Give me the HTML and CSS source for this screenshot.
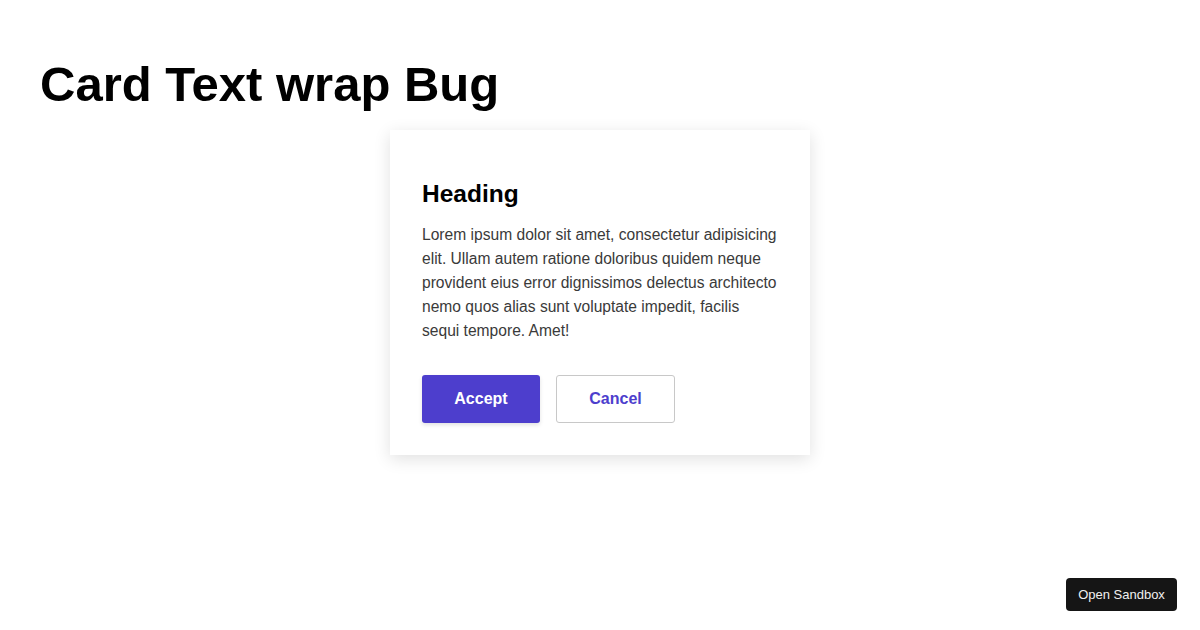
FILE: index.html
```html
<!DOCTYPE html>
<html>
<head>
<meta charset="utf-8">
<link rel="stylesheet" href="styles.css">
</head>
<body>
<div class="page">
  <h1 class="title">Card Text wrap Bug</h1>
  <div class="card">
    <h2 class="card-heading">Heading</h2>
    <p class="card-text">Lorem ipsum dolor sit amet, consectetur adipisicing elit. Ullam autem ratione doloribus quidem neque provident eius error dignissimos delectus architecto nemo quos alias sunt voluptate impedit, facilis sequi tempore. Amet!</p>
    <div class="actions">
      <button class="btn btn-primary">Accept</button>
      <button class="btn btn-secondary">Cancel</button>
    </div>
  </div>
</div>
<a class="sandbox">Open Sandbox</a>
</body>
</html>
```
FILE: styles.css
```css
html, body {
  margin: 0;
  padding: 0;
  background: #fff;
  font-family: "Liberation Sans", Arial, sans-serif;
}
.page {
  padding: 56px 40px 40px;
  display: flex;
  flex-direction: column;
}
.title {
  margin: 0 0 18px;
  font-size: 49px;
  font-weight: 700;
  color: #000;
  line-height: 56px;
}
.card {
  align-self: center;
  width: 420px;
  box-sizing: border-box;
  padding: 48px 32px 32px;
  background: #fff;
  box-shadow: 0 4px 16px rgba(0, 0, 0, 0.12);
}
.card-heading {
  margin: 0 0 13px;
  font-size: 24.5px;
  line-height: 32px;
  font-weight: 700;
  color: #000;
}
.card-text {
  margin: 0 0 32px;
  font-size: 15.6px;
  line-height: 24px;
  color: #3a3a3a;
}
.actions {
  display: flex;
  gap: 16px;
}
.btn {
  width: 118px;
  height: 48px;
  box-sizing: border-box;
  border-radius: 3px;
  font-family: "Liberation Sans", Arial, sans-serif;
  font-size: 16px;
  font-weight: 700;
  cursor: pointer;
}
.btn-primary {
  background: #4d3ecd;
  color: #fff;
  border: none;
  box-shadow: 0 2px 4px rgba(0, 0, 0, 0.12);
}
.btn-secondary {
  width: 119px;
  background: #fff;
  color: #4d3ecd;
  border: 1px solid #c8c8c8;
}
.sandbox {
  position: fixed;
  right: 23px;
  bottom: 19px;
  width: 111px;
  height: 33px;
  box-sizing: border-box;
  display: flex;
  align-items: center;
  justify-content: center;
  background: #151515;
  color: #f0f0f0;
  border-radius: 4px;
  font-size: 13px;
  font-family: "Liberation Sans", Arial, sans-serif;
}
```
